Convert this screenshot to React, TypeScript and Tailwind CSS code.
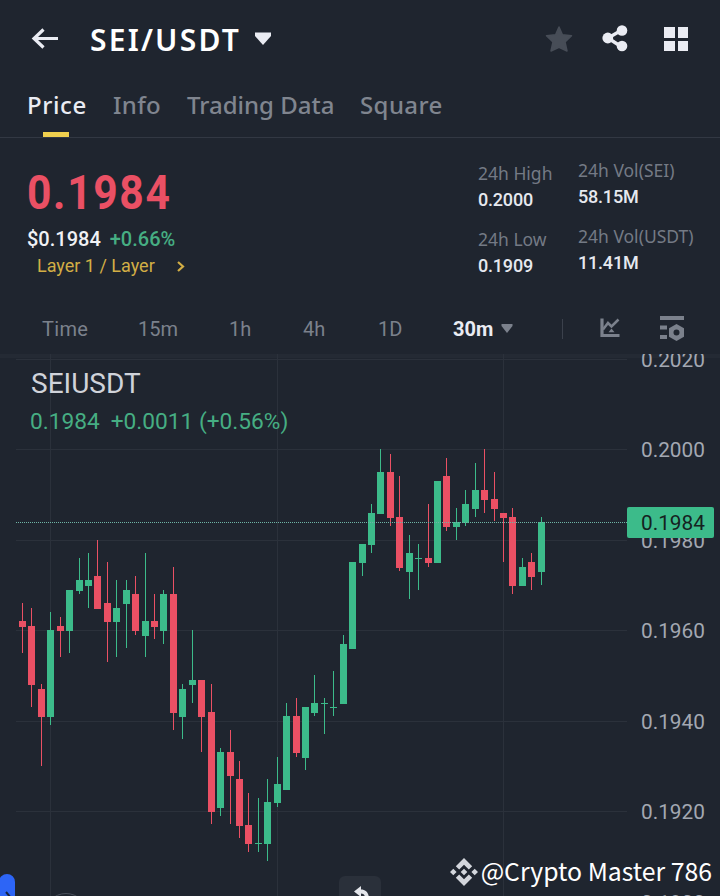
import React from 'react';

type Direction = 'up' | 'down';
type Candle = [high: number, top: number, bottom: number, low: number, direction: Direction];

const UP = '#3cbb8a';
const DOWN = '#ea5064';

// vertical extents on the chart canvas, oldest candle first
const CANDLES: Candle[] = [
  [603, 621, 627, 653, 'down'],
  [608, 626, 685, 707, 'down'],
  [684, 689, 717, 766, 'down'],
  [612, 630, 717, 725, 'up'],
  [617, 626, 631, 657, 'down'],
  [590, 590, 631, 653, 'up'],
  [558, 580, 591, 594, 'up'],
  [553, 580, 586, 608, 'up'],
  [540, 576, 609, 609, 'down'],
  [562, 603, 622, 662, 'down'],
  [580, 608, 622, 657, 'up'],
  [580, 590, 604, 648, 'up'],
  [576, 594, 631, 635, 'down'],
  [553, 621, 636, 657, 'up'],
  [594, 621, 627, 639, 'down'],
  [590, 594, 631, 644, 'up'],
  [567, 594, 713, 730, 'down'],
  [684, 689, 717, 739, 'up'],
  [630, 680, 685, 703, 'up'],
  [680, 680, 717, 752, 'down'],
  [684, 712, 812, 824, 'down'],
  [748, 752, 808, 816, 'up'],
  [730, 752, 776, 824, 'down'],
  [761, 779, 826, 838, 'down'],
  [793, 825, 844, 852, 'down'],
  [798, 843, 844, 852, 'up'],
  [779, 802, 844, 861, 'up'],
  [757, 784, 803, 807, 'up'],
  [703, 716, 790, 790, 'up'],
  [698, 716, 753, 757, 'down'],
  [707, 707, 758, 770, 'up'],
  [675, 703, 713, 716, 'up'],
  [698, 703, 704, 734, 'up'],
  [671, 707, 708, 716, 'up'],
  [635, 644, 704, 704, 'up'],
  [562, 562, 649, 649, 'up'],
  [544, 544, 563, 576, 'up'],
  [504, 513, 545, 553, 'up'],
  [449, 472, 514, 514, 'up'],
  [454, 472, 518, 526, 'down'],
  [476, 517, 568, 571, 'down'],
  [535, 553, 572, 599, 'up'],
  [544, 558, 559, 590, 'up'],
  [504, 558, 563, 567, 'down'],
  [481, 481, 563, 563, 'up'],
  [458, 476, 527, 531, 'down'],
  [508, 522, 527, 540, 'up'],
  [490, 504, 523, 526, 'up'],
  [463, 490, 509, 517, 'up'],
  [449, 490, 500, 513, 'down'],
  [472, 499, 509, 521, 'down'],
  [513, 513, 518, 562, 'down'],
  [508, 517, 586, 594, 'down'],
  [558, 567, 586, 586, 'up'],
  [553, 562, 577, 590, 'down'],
  [517, 522, 572, 585, 'up'],
];

const PRICE_LINES = [
  { y: 359, label: '0.2020' },
  { y: 449, label: '0.2000' },
  { y: 540, label: '0.1980' },
  { y: 630, label: '0.1960' },
  { y: 721, label: '0.1940' },
  { y: 811, label: '0.1920' },
  { y: 902, label: '0.1900' },
];

const TIME_LINES = [50, 277, 503];

const Header = () => (
  <header className="flex h-[78px] items-center pl-[31px] text-[#eaecf3]">
    <svg width="28" height="22" viewBox="0 0 28 22" fill="none" stroke="currentColor" strokeWidth="3.2">
      <path d="M27 10.5H4M12.5 1.5L3 10.5L12.5 19.5" />
    </svg>
    <h1 className="ml-[31px] w-[163px] whitespace-nowrap pt-[2px] font-['Noto_Sans'] text-[30px] font-semibold leading-none tracking-[2.2px] text-white">
      SEI/USDT
    </h1>
    <svg className="ml-px" width="18" height="14" viewBox="0 0 18 14" fill="currentColor">
      <path d="M1 0.5H17V4L9 13L1 4Z" />
    </svg>
    <svg className="ml-[273px] text-[#474d57]" width="28" height="28" viewBox="0 0 28 28" fill="currentColor" stroke="currentColor" strokeWidth="1.5" strokeLinejoin="round">
      <path d="M14 2L17.4 9.8L26.5 10.7L20 17L22 26L14 22.4L6 26L8 17L1.5 10.7L10.6 9.8Z" />
    </svg>
    <svg className="ml-[28px]" width="28" height="28" viewBox="0 0 28 28" fill="currentColor">
      <path d="M20 5.5L7 13L20 21.5" fill="none" stroke="currentColor" strokeWidth="3.4" />
      <circle cx="6.8" cy="13" r="5.4" />
      <circle cx="21" cy="5.5" r="5.3" />
      <circle cx="21" cy="21" r="5.3" />
    </svg>
    <div className="ml-[35px] grid grid-cols-2 gap-[3px]">
      <i className="h-[10.5px] w-[10.5px] bg-current" />
      <i className="h-[10.5px] w-[10.5px] bg-current" />
      <i className="h-[10.5px] w-[10.5px] bg-current" />
      <i className="h-[10.5px] w-[10.5px] bg-current" />
    </div>
  </header>
);

const Tabs = () => (
  <nav className="flex h-[60px] border-b border-[#323843] pl-[27px] pt-3 font-['Noto_Sans'] text-[24px] font-medium leading-[30px] text-[#80858f]">
    <div className="flex w-[86px] flex-col text-[#eaecf3]">
      <span className="tracking-[0.6px]">Price</span>
      <span className="ml-4 mt-3 h-[5px] w-[26px] bg-[#f0d04e]" />
    </div>
    <span className="w-[74px] tracking-[0.3px]">Info</span>
    <span className="w-[173px] whitespace-nowrap">Trading Data</span>
    <span className="tracking-[0.4px]">Square</span>
  </nav>
);

interface StatProps {
  label: string;
  value: string;
}

const Stat: React.FC<StatProps> = ({ label, value }) => (
  <div className="h-[66px] whitespace-nowrap">
    <p className="h-[26px] font-['Noto_Sans'] text-[17.5px] leading-[24px] text-[#747a85]">{label}</p>
    <p className="font-[Roboto] text-[18px] font-medium leading-[26px] tracking-[-0.2px] text-[#e6e9ef]">{value}</p>
  </div>
);

const Summary = () => (
  <section className="flex h-[165px] pl-[27px]">
    <div className="w-[451px] pt-[28px] font-[Roboto]">
      <p className="h-[60px] origin-left scale-x-[0.87] text-[49px] font-bold leading-[54px] tracking-[1.9px] text-[#ea5064]">
        0.1984
      </p>
      <div className="flex gap-[9px] text-[20px] font-medium leading-[26px]">
        <span className="text-[#f0f1f5]">$0.1984</span>
        <span className="text-[#46ae83]">+0.66%</span>
      </div>
      <div className="flex items-center pl-[10px] text-[18px] leading-[28px] text-[#d2ae45]">
        <span className="w-[140px]">Layer 1 / Layer</span>
        <svg width="8" height="11" viewBox="0 0 8 11" fill="none" stroke="currentColor" strokeWidth="2.2">
          <path d="M1 1L6 5.5L1 10" />
        </svg>
      </div>
    </div>
    <div className="w-[100px] pt-[23px]">
      <Stat label="24h High" value="0.2000" />
      <Stat label="24h Low" value="0.1909" />
    </div>
    <div className="pt-5">
      <Stat label="24h Vol(SEI)" value="58.15M" />
      <Stat label="24h Vol(USDT)" value="11.41M" />
    </div>
  </section>
);

const Intervals = () => (
  <section className="flex h-[51px] items-center pl-[42px] font-[Roboto] text-[20px] text-[#7b818c]">
    <span className="w-[96px] tracking-[0.3px]">Time</span>
    <span className="w-[91px]">15m</span>
    <span className="w-[74px]">1h</span>
    <span className="w-[75px]">4h</span>
    <span className="w-[75px]">1D</span>
    <span className="w-[48px] font-bold text-[#eaecf3]">30m</span>
    <svg width="12" height="10" viewBox="0 0 12 10" fill="currentColor">
      <path d="M0.5 0H11.5V2L6 9L0.5 2Z" />
    </svg>
    <span className="ml-[49px] h-5 w-px bg-[#3b414c]" />
    <svg className="ml-[37px]" width="21" height="21" viewBox="0 0 21 21" fill="none" stroke="currentColor">
      <path d="M2 0.5V17.5H19.5" strokeWidth="3.2" />
      <path d="M3 11.5L8 5L11.5 8.5L18.5 1.5" strokeWidth="2.5" />
      <path d="M8.5 14.2L11.5 10.5L14.5 14.2Z" fill="currentColor" stroke="none" />
    </svg>
    <svg className="ml-[38px]" width="26" height="26" viewBox="0 0 26 26" fill="currentColor">
      <path d="M1 0H25V4H1ZM1 9.5H8V13.5H1ZM1 19H8V23H1Z" />
      <path fillRule="evenodd" d="M17.5 8L25 12.3V20.7L17.5 25L10 20.7V12.3ZM17.5 13.5A3 3 0 1 0 17.5 19.5A3 3 0 1 0 17.5 13.5Z" />
    </svg>
  </section>
);

const CandleChart = () => (
  <svg className="block" width="720" height="542" viewBox="0 354 720 542" shapeRendering="crispEdges">
    <rect y="354" width="720" height="4" fill="#242a34" />
    {PRICE_LINES.map(({ y }) => (
      <rect key={y} x="16" y={y} width="611" height="1" fill="#2b313b" />
    ))}
    {TIME_LINES.map((x) => (
      <rect key={x} x={x} y="354" width="1" height="542" fill="#2b313b" />
    ))}
    {CANDLES.map(([high, top, bottom, low, direction], i) => {
      const x = Math.floor(22.48 + i * 9.433);
      return (
        <g key={i} fill={direction === 'up' ? UP : DOWN}>
          <rect x={x} y={high} width="1" height={low - high} />
          <rect x={x - 3} y={top} width="7" height={bottom - top} />
        </g>
      );
    })}
    <path d="M16 522.5H627" stroke="#6fb5a6" strokeDasharray="1 1" />
    <g fill="#a3a8b2" fontFamily="Roboto, sans-serif" fontSize="20.8">
      {PRICE_LINES.map(({ y, label }) => (
        <text key={label} x="641" y={y + 8}>{label}</text>
      ))}
      <rect x="627" y="507" width="87" height="31" rx="2" fill={UP} shapeRendering="auto" />
      <text x="641" y="530" fill="#15221f">0.1984</text>
    </g>
  </svg>
);

const Watermark = () => (
  <div className="absolute bottom-0 right-[8px] flex h-[48px] items-center text-white">
    <svg width="28" height="28" viewBox="0 0 28 28" fill="#d3d6dc">
      <path d="M14 0L22.2 8.2L18.8 11.6L14 6.8L9.2 11.6L5.8 8.2Z" />
      <path d="M14 28L22.2 19.8L18.8 16.4L14 21.2L9.2 16.4L5.8 19.8Z" />
      <path d="M3.3 10.7L6.6 14L3.3 17.3L0 14ZM24.7 10.7L28 14L24.7 17.3L21.4 14ZM14 10.7L17.3 14L14 17.3L10.7 14Z" />
    </svg>
    <span className="ml-[3px] mt-[-3px] whitespace-nowrap font-['Noto_Sans_CJK_SC',sans-serif] text-[24.8px] font-normal leading-none">
      @Crypto Master 786
    </span>
  </div>
);

const Chart = () => (
  <section className="relative h-[542px] overflow-hidden">
    <CandleChart />
    <div className="absolute left-[30px] top-[13px] whitespace-nowrap font-[Roboto]">
      <p className="pl-px text-[28px] leading-[34px] text-[#d0d3da]">SEIUSDT</p>
      <p className="mt-1 flex gap-[11px] text-[22.7px] leading-[34px] text-[#46ae83]">
        <span>0.1984</span>
        <span>+0.0011 (+0.56%)</span>
      </p>
    </div>
    <div className="absolute -left-px top-[520px] h-10 w-4 rounded-full bg-[#2d65f6]">
      <svg className="ml-[6px] mt-[17px]" width="8" height="8" viewBox="0 0 8 8" stroke="#17233e" strokeWidth="2">
        <path d="M1 1L6 7" />
      </svg>
    </div>
    <div className="absolute left-[44px] top-[539px] h-11 w-11 rounded-full border border-[#4a505b]" />
    <div className="absolute left-[339px] top-[522px] flex h-10 w-[42px] justify-center rounded-md bg-[#2a303a] pl-[3px] pt-[10px]">
      <svg width="16" height="16" viewBox="0 0 16 16" fill="#e4e6eb">
        <path d="M0 5.5L7 0V3.5C12 3.5 15 7 15 13H11.5C11 9 9.5 7.5 7 7.5V11Z" />
      </svg>
    </div>
    <Watermark />
  </section>
);

export default function App() {
  return (
    <main className="h-[896px] w-[720px] overflow-hidden bg-[#1f252f]">
      <Header />
      <Tabs />
      <Summary />
      <Intervals />
      <Chart />
    </main>
  );
}
